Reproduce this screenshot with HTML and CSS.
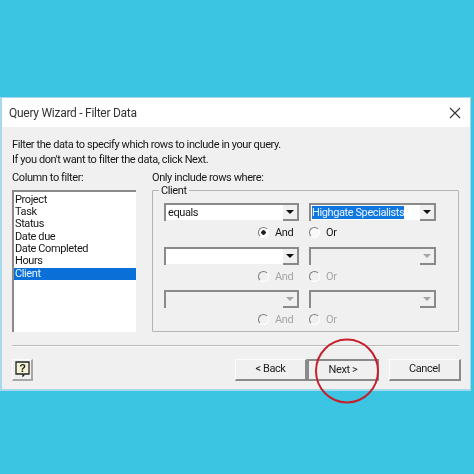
FILE: index.html
```html
<!DOCTYPE html>
<html lang="en">
<head>
<meta charset="utf-8">
<title>Query Wizard - Filter Data</title>
<link rel="stylesheet" href="styles.css">
</head>
<body>
<div class="dialog">
  <div class="titlebar">
    <span class="title">Query Wizard - Filter Data</span>
    <svg class="close" width="12" height="12" viewBox="0 0 12 12"><path d="M1 1L11 11M11 1L1 11" stroke="#333" stroke-width="1.1" fill="none"/></svg>
  </div>
  <div class="content">
    <p class="intro">Filter the data to specify which rows to include in your query.<br>If you don't want to filter the data, click Next.</p>
    <div class="columns">
      <div class="col">
        <div class="label">Column to filter:</div>
        <ul class="list">
          <li>Project</li>
          <li>Task</li>
          <li>Status</li>
          <li>Date due</li>
          <li>Date Completed</li>
          <li>Hours</li>
          <li class="selected">Client</li>
        </ul>
      </div>
      <div class="col">
        <div class="label">Only include rows where:</div>
        <fieldset class="group">
          <legend>Client</legend>
          <div class="combos">
            <div class="combo"><span class="value">equals</span><span class="drop"><i class="arrow"></i></span></div>
            <div class="combo"><span class="value"><span class="hilite">Highgate Specialists</span></span><span class="drop"><i class="arrow"></i></span></div>
          </div>
          <div class="radios">
            <span class="radio on">And</span>
            <span class="radio">Or</span>
          </div>
          <div class="combos">
            <div class="combo"><span class="value"></span><span class="drop"><i class="arrow"></i></span></div>
            <div class="combo off"><span class="value"></span><span class="drop"><i class="arrow"></i></span></div>
          </div>
          <div class="radios off">
            <span class="radio">And</span>
            <span class="radio">Or</span>
          </div>
          <div class="combos">
            <div class="combo off"><span class="value"></span><span class="drop"><i class="arrow"></i></span></div>
            <div class="combo off"><span class="value"></span><span class="drop"><i class="arrow"></i></span></div>
          </div>
          <div class="radios off">
            <span class="radio">And</span>
            <span class="radio">Or</span>
          </div>
        </fieldset>
      </div>
    </div>
    <div class="divider"></div>
    <div class="footer">
      <button class="btn help" type="button" aria-label="Help">
        <svg width="15" height="16" viewBox="0 0 15 16"><path d="M1 1H14V13H9.5L8 15V13H1Z" fill="#f4f1d4" stroke="#222" stroke-width="1.3"/><text x="7.5" y="11" text-anchor="middle" class="helpmark">?</text></svg>
      </button>
      <div class="actions">
        <button class="btn" type="button">&lt; Back</button>
        <button class="btn next" type="button">Next &gt;</button>
        <button class="btn cancel" type="button">Cancel</button>
      </div>
    </div>
  </div>
</div>
<svg class="circle" width="68" height="68" viewBox="0 0 68 68"><ellipse cx="34" cy="34" rx="31" ry="31.5" fill="none" stroke="#c5202c" stroke-width="2"/></svg>
</body>
</html>
```
FILE: styles.css
```css
html, body {
  margin: 0;
  padding: 0;
}
body {
  position: relative;
  width: 474px;
  height: 474px;
  overflow: hidden;
  background: #3bc5e3;
  font-family: Roboto, "Liberation Sans", sans-serif;
  font-size: 11px;
  letter-spacing: -0.4px;
  color: #161616;
}
.dialog {
  box-sizing: border-box;
  width: 471px;
  height: 294px;
  margin-top: 97px;
  border: 1px solid #a8d8ec;
  border-width: 1px 1px 2px 2px;
  background: #f0f0f0;
  filter: blur(0.55px);
}
.titlebar {
  display: flex;
  align-items: center;
  justify-content: space-between;
  height: 29px;
  padding: 0 9px 0 7px;
  background: #fff;
}
.title {
  font-size: 12px;
  letter-spacing: -0.27px;
  color: #333;
}
.content {
  padding: 0 9px 0 10px;
}
.intro {
  margin: 10px 0 0;
  line-height: 15px;
  white-space: nowrap;
}
.columns {
  display: grid;
  grid-template-columns: 124px 307px;
  column-gap: 16px;
  margin-top: 3px;
}
.label {
  height: 15px;
  line-height: 15px;
  margin-bottom: 5px;
}
.list {
  box-sizing: border-box;
  height: 142px;
  margin: 0;
  padding: 1.5px 0 0 1px;
  list-style: none;
  background: #fff;
  border-top: 2px solid #8a8a8a;
  border-left: 2px solid #8a8a8a;
}
.list li {
  height: 12.4px;
  line-height: 12.4px;
  white-space: nowrap;
}
.list .selected {
  margin-left: -1px;
  padding-left: 1px;
  background: #0a6fd6;
  color: #e8f4ff;
}
.group {
  box-sizing: border-box;
  height: 149px;
  margin: -7px 0 0;
  padding: 6px 22px 0 11px;
  border: 1px solid #b4b4b4;
  border-radius: 1px;
}
.group legend {
  margin-left: -5px;
  padding: 2px 2px 0;
  line-height: 12px;
}
.combos {
  display: grid;
  grid-template-columns: 135px 127px;
  column-gap: 10px;
}
.combo {
  box-sizing: border-box;
  display: flex;
  height: 18px;
  background: #f0f0f0;
  border-top: 2px solid #8a8a8a;
  border-left: 2px solid #8a8a8a;
}
.value {
  flex: 1;
  padding-left: 2px;
  line-height: 15px;
  background: #fff;
  margin-bottom: 1px;
  white-space: nowrap;
}
.combo.off .value {
  background: #f0f0f0;
}
.hilite {
  margin-left: -1px;
  background: #1177e0;
  color: #e8f4ff;
}
.drop {
  box-sizing: border-box;
  display: flex;
  align-items: center;
  justify-content: center;
  width: 16px;
  background: #f0f0f0;
  border-right: 2px solid #8a8a8a;
  border-bottom: 2px solid #8a8a8a;
}
.arrow {
  width: 0;
  height: 0;
  border: 4px solid transparent;
  border-top-color: #111;
  border-bottom-width: 0;
}
.combo.off .arrow {
  border-top-color: #a5a5a5;
}
.radios {
  box-sizing: border-box;
  display: flex;
  height: 25.5px;
  align-items: center;
  padding: 0 0 3px 94px;
}
.radios.off {
  padding-bottom: 2px;
}
.radio {
  display: flex;
  align-items: center;
  width: 51px;
}
.radio::before {
  content: "";
  box-sizing: border-box;
  flex: none;
  width: 11px;
  height: 11px;
  margin-right: 6px;
  border-radius: 50%;
  border: 1.5px solid #fff;
  border-top-color: #7d7d7d;
  border-left-color: #7d7d7d;
  background: #f8f8f8;
}
.radio.on::before {
  background: radial-gradient(circle, #222 0 2px, #fff 2.5px);
}
.radios.off .radio {
  color: #a5a5a5;
}
.radios.off .radio::before {
  background: #f0f0f0;
}
.divider {
  height: 1px;
  margin-top: 13px;
  margin-right: 2px;
  background: #bcbcbc;
  border-bottom: 1px solid #fafafa;
}
.footer {
  display: flex;
  justify-content: space-between;
  margin-top: 12px;
}
.btn {
  box-sizing: border-box;
  width: 72px;
  height: 22px;
  padding: 0 0 2px;
  font: inherit;
  letter-spacing: inherit;
  color: #222;
  background: #f0f0f0;
  border: 1px solid #fcfcfc;
  border-right: 2px solid #8a8a8a;
  border-bottom: 2px solid #8a8a8a;
}
.help {
  display: flex;
  align-items: center;
  justify-content: center;
  width: 21px;
  height: 22px;
  border-right-color: #a8a8a8;
  border-bottom-color: #a8a8a8;
}
.helpmark {
  font-family: "Liberation Sans", sans-serif;
  font-size: 11px;
  font-weight: 700;
  fill: #222;
}
.actions {
  display: flex;
}
.next {
  border-top-color: #8a8a8a;
  border-left-color: #8a8a8a;
  border-left-width: 2px;
  border-top-width: 2px;
}
.cancel {
  margin-left: 10px;
}
.circle {
  position: absolute;
  left: 313px;
  top: 337px;
}
```
